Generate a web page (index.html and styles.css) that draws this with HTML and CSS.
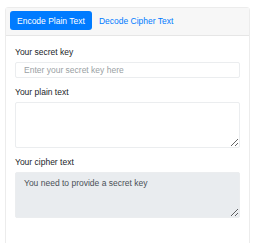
FILE: index.html
```html
<!DOCTYPE html>
<html lang="en">
<head>
    <meta charset="UTF-8">
    <title>Cipher</title>
    <link rel="stylesheet" href="styles.css">
</head>
<body>
    <div class="card">
        <div class="card-header">
            <button class="tab active">Encode Plain Text</button>
            <button class="tab">Decode Cipher Text</button>
        </div>
        <div class="card-body">
            <label class="field-label">Your secret key</label>
            <input class="field" type="text" placeholder="Enter your secret key here">

            <label class="field-label">Your plain text</label>
            <textarea class="field area"></textarea>

            <label class="field-label">Your cipher text</label>
            <textarea class="field area" readonly>You need to provide a secret key</textarea>
        </div>
    </div>
</body>
</html>
```
FILE: styles.css
```css
body {
    margin: 0;
    padding: 7px 6px 0 5px;
    font-family: "Liberation Sans", Arial, sans-serif;
    color: #212529;
    background: #fff;
}
.card {
    border: 1px solid #ececec;
    border-radius: 3px;
    height: 240px;
    box-sizing: border-box;
}
.card-header {
    display: flex;
    padding: 3px 4px 5px 4px;
    background-color: #f7f7f7;
    border-bottom: 1px solid #e6e6e6;
}
.tab {
    height: 19px;
    padding: 0 7px;
    border: none;
    border-radius: 3px;
    background: none;
    color: #007bff;
    font-family: inherit;
    font-size: 8.5px;
    cursor: pointer;
}
.tab.active {
    background-color: #007bff;
    color: white;
}
.card-body {
    display: flex;
    flex-direction: column;
    padding: 11px 9px 0 9px;
}
.field-label {
    font-size: 8.5px;
    line-height: 11px;
    margin-bottom: 4px;
}
.field {
    box-sizing: border-box;
    width: 100%;
    height: 16px;
    margin: 0 0 9px 0;
    padding: 0 8px;
    border: 1px solid #ebedef;
    border-radius: 2px;
    font-family: inherit;
    font-size: 8.5px;
    color: #495057;
}
.field::placeholder {
    color: #9a9fa4;
}
.area {
    height: 46px;
    padding: 5px 8px;
    resize: vertical;
}
.area[readonly] {
    background-color: #e9ecef;
}
```
